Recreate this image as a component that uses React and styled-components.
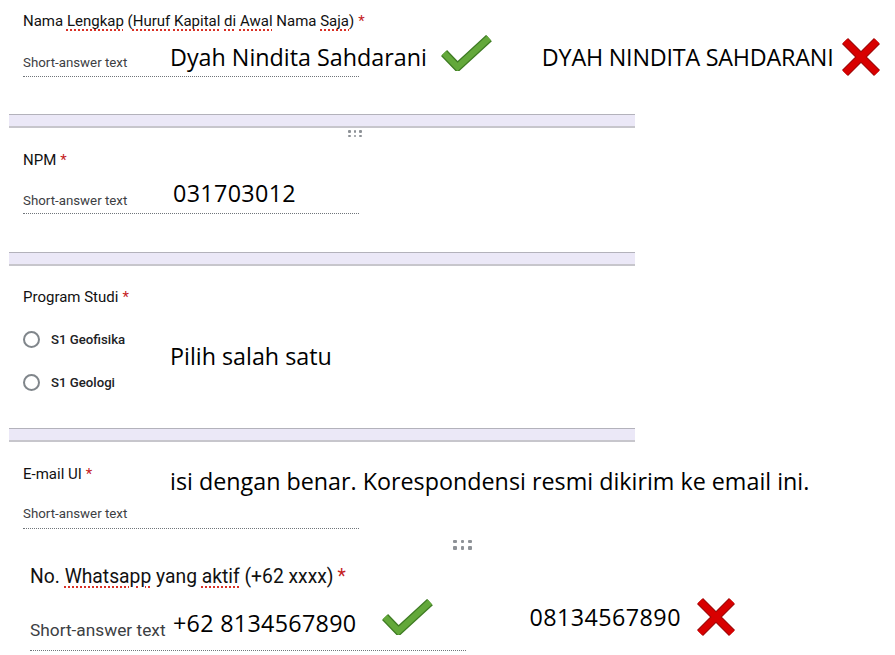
import React from "react";
import styled, { createGlobalStyle } from "styled-components";

const Global = createGlobalStyle`
  html, body { margin: 0; padding: 0; background: #ffffff; }
  body { font-family: Roboto, "Liberation Sans", sans-serif; }
`;

const Page = styled.div`
  display: flex;
  flex-direction: column;
  width: 895px;
  height: 655px;
  overflow: hidden;
  background: #ffffff;
`;

const Section = styled.section`
  display: flex;
  flex-direction: column;
  align-items: flex-start;
  padding-left: ${(p) => p.$indent ?? 23}px;
`;

const Title = styled.div`
  font-family: Roboto, "Liberation Sans", sans-serif;
  font-size: ${(p) => p.$size ?? 15}px;
  line-height: ${(p) => p.$lh ?? 20}px;
  font-weight: ${(p) => p.$weight ?? 400};
  color: #111111;
  white-space: nowrap;
  margin-top: ${(p) => p.$mt ?? 0}px;
  width: ${(p) => (p.$w ? `${p.$w}px` : "auto")};
`;

const Star = styled.span`
  color: #c5221f;
  margin-left: 4px;
`;

const Spell = styled.span`
  text-decoration: underline dotted #d93025;
  text-decoration-thickness: 1.5px;
  text-underline-offset: 3px;
`;

const AnswerRow = styled.div`
  display: grid;
  grid-template-columns: ${(p) => p.$label}px auto;
  margin-top: ${(p) => p.$mt ?? 0}px;
`;

const Field = styled.div`
  grid-column: 1 / span 2;
  grid-row: 1;
  justify-self: start;
  align-self: start;
  width: ${(p) => p.$w}px;
  padding-top: ${(p) => p.$pt}px;
  padding-bottom: ${(p) => p.$pb ?? 5.5}px;
  border-bottom: 1px dotted #70757a;
  font-family: Roboto, "Liberation Sans", sans-serif;
  font-size: ${(p) => p.$size ?? 13.3}px;
  line-height: ${(p) => p.$lh ?? 16}px;
  color: #3c4043;
  white-space: nowrap;
`;

const PlainField = styled(Field)`
  margin-top: ${(p) => p.$mt ?? 0}px;
`;

const Callouts = styled.div`
  grid-column: 2;
  grid-row: 1;
  display: flex;
  align-items: flex-start;
`;

const Callout = styled.div`
  font-family: "Open Sans", "Noto Sans", sans-serif;
  font-size: 23.3px;
  line-height: 32px;
  color: #000000;
  white-space: nowrap;
  margin-top: ${(p) => p.$dy ?? 0}px;
  margin-left: ${(p) => p.$gap ?? 0}px;
  letter-spacing: ${(p) => p.$ls ?? 0}px;
`;

const Mark = styled.svg`
  display: block;
  flex: none;
  margin-top: ${(p) => p.$dy ?? 0}px;
  margin-left: ${(p) => p.$gap ?? 0}px;
`;

const Band = styled.div`
  width: 626px;
  height: 11px;
  margin-left: 9px;
  margin-top: ${(p) => p.$mt}px;
  background: #ebe8f7;
  border-top: 1px solid #b3b2bb;
  border-bottom: 2px solid #c7c6cc;
`;

const Handle = styled.div`
  display: grid;
  grid-template-columns: repeat(3, ${(p) => p.$dot}px);
  grid-auto-rows: ${(p) => p.$dot}px;
  gap: ${(p) => p.$gapY}px ${(p) => p.$gapX}px;
  margin-left: ${(p) => p.$left}px;
  margin-top: ${(p) => p.$mt}px;
`;

const Dot = styled.span`
  background: #8e9297;
  border-radius: 1px;
`;

const TitleRow = styled.div`
  display: flex;
  align-items: flex-start;
  margin-top: ${(p) => p.$mt ?? 0}px;
`;

const OptionsRow = styled.div`
  display: flex;
  align-items: flex-start;
  margin-top: ${(p) => p.$mt ?? 0}px;
`;

const Options = styled.div`
  display: flex;
  flex-direction: column;
  gap: 19px;
  width: 147px;
`;

const Option = styled.label`
  display: flex;
  align-items: center;
  gap: 11px;
  height: 24px;
  font-family: Roboto, "Liberation Sans", sans-serif;
  font-size: 13.2px;
  font-weight: 500;
  color: #202124;
  white-space: nowrap;
`;

const Radio = styled.span`
  width: 13px;
  height: 13px;
  border: 2px solid #80868b;
  border-radius: 50%;
  flex: none;
`;

function Check({ gap, dy }) {
  return (
    <Mark $gap={gap} $dy={dy} width="51" height="36" viewBox="0 0 51 36">
      <polyline points="3,18 16.5,32 48,3" fill="none" stroke="#3e7b23" strokeWidth="8.5" strokeLinejoin="miter" />
      <polyline points="3,18 16.5,32 48,3" fill="none" stroke="#63a83a" strokeWidth="6" strokeLinejoin="miter" />
    </Mark>
  );
}

function Cross({ gap, dy }) {
  return (
    <Mark $gap={gap} $dy={dy} width="40" height="40" viewBox="0 0 40 40">
      <g fill="none" strokeLinecap="butt">
        <path d="M4 4 L36 36 M36 4 L4 36" stroke="#9c0a0a" strokeWidth="8.5" />
        <path d="M4 4 L36 36 M36 4 L4 36" stroke="#d80000" strokeWidth="6.5" />
      </g>
    </Mark>
  );
}

function DragHandle({ left, mt, dot, gapX, gapY }) {
  return (
    <Handle $left={left} $mt={mt} $dot={dot} $gapX={gapX} $gapY={gapY}>
      {Array.from({ length: 6 }).map((_, i) => (
        <Dot key={i} />
      ))}
    </Handle>
  );
}

export default function App() {
  return (
    <>
      <Global />
      <Page>
        <Section>
          <Title $mt={11}>
            Nama <Spell>Lengkap</Spell> (<Spell>Huruf</Spell> <Spell>Kapital</Spell> <Spell>di</Spell>{" "}
            <Spell>Awal</Spell> Nama <Spell>Saja</Spell>)<Star>*</Star>
          </Title>
          <AnswerRow $label={147} $mt={10}>
            <Field $w={336} $pt={13.5}>Short-answer text</Field>
            <Callouts>
              <Callout>Dyah Nindita Sahdarani</Callout>
              <Check gap={14} dy={-6} />
              <Callout $gap={50} $ls={-0.2}>DYAH NINDITA SAHDARANI</Callout>
              <Cross gap={8} dy={-4} />
            </Callouts>
          </AnswerRow>
        </Section>

        <Band $mt={37} />
        <DragHandle left={348} mt={2} dot={2.5} gapX={3} gapY={2} />

        <Section>
          <Title $mt={12.5}>
            NPM<Star>*</Star>
          </Title>
          <AnswerRow $label={147} $mt={7}>
            <Field $w={336} $pt={16} $pb={4.5}>Short-answer text</Field>
            <Callouts>
              <Callout $gap={3} $ls={0.35}>031703012</Callout>
            </Callouts>
          </AnswerRow>
        </Section>

        <Band $mt={38} />

        <Section>
          <Title $mt={21}>
            Program Studi<Star>*</Star>
          </Title>
          <OptionsRow $mt={20.5}>
            <Options>
              <Option>
                <Radio />
                S1 Geofisika
              </Option>
              <Option>
                <Radio />
                S1 Geologi
              </Option>
            </Options>
            <Callout $dy={12}>Pilih salah satu</Callout>
          </OptionsRow>
        </Section>

        <Band $mt={33} />

        <Section>
          <TitleRow $mt={22}>
            <Title $w={147}>
              E-mail UI<Star>*</Star>
            </Title>
            <Callout $dy={1}>isi dengan benar. Korespondensi resmi dikirim ke email ini.</Callout>
          </TitleRow>
          <PlainField $w={336} $pt={9.5}>Short-answer text</PlainField>
        </Section>

        <DragHandle left={453} mt={11} dot={3.5} gapX={4} gapY={3} />

        <Section $indent={30}>
          <Title $size={19.3} $lh={24} $mt={15.5}>
            No. <Spell>Whatsapp</Spell> yang <Spell>aktif</Spell> (+62 xxxx)<Star>*</Star>
          </Title>
          <AnswerRow $label={143} $mt={7.5}>
            <Field $w={436} $pt={23} $pb={10} $size={17.3} $lh={20}>Short-answer text</Field>
            <Callouts>
              <Callout $dy={10} $ls={0.3}>+62 8134567890</Callout>
              <Check gap={26} dy={2} />
              <Callout $gap={96} $dy={4} $ls={0.45}>08134567890</Callout>
              <Cross gap={15} dy={0} />
            </Callouts>
          </AnswerRow>
        </Section>
      </Page>
    </>
  );
}
